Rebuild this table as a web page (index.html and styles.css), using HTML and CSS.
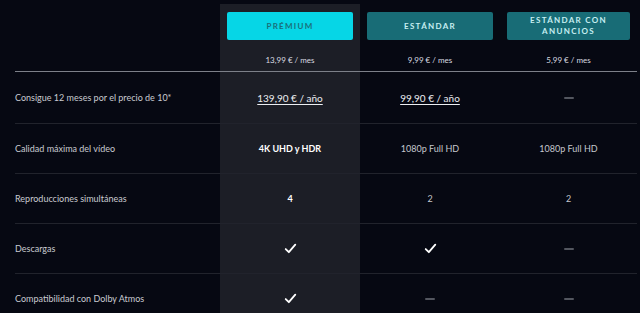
FILE: index.html
```html
<!DOCTYPE html>
<html lang="es">
<head>
<meta charset="utf-8">
<title>Planes</title>
<link rel="stylesheet" href="styles.css">
</head>
<body>
<div class="table">
  <div class="head">
    <div class="hcell"></div>
    <div class="hcell hl">
      <div class="btn btn-premium">PRÉMIUM</div>
      <div class="price">13,99 € / mes</div>
    </div>
    <div class="hcell">
      <div class="btn btn-std">ESTÁNDAR</div>
      <div class="price">9,99 € / mes</div>
    </div>
    <div class="hcell">
      <div class="btn btn-std">ESTÁNDAR CON<br>ANUNCIOS</div>
      <div class="price">5,99 € / mes</div>
    </div>
  </div>

  <div class="row first">
    <div class="label">Consigue 12 meses por el precio de 10*</div>
    <div class="cell hl"><span class="val link">139,90 € / año</span></div>
    <div class="cell"><span class="val link">99,90 € / año</span></div>
    <div class="cell"><span class="dash"></span></div>
  </div>
  <div class="row">
    <div class="label">Calidad máxima del vídeo</div>
    <div class="cell hl"><span class="val strong">4K UHD y HDR</span></div>
    <div class="cell"><span class="val">1080p Full HD</span></div>
    <div class="cell"><span class="val">1080p Full HD</span></div>
  </div>
  <div class="row">
    <div class="label">Reproducciones simultáneas</div>
    <div class="cell hl"><span class="val strong">4</span></div>
    <div class="cell"><span class="val">2</span></div>
    <div class="cell"><span class="val">2</span></div>
  </div>
  <div class="row">
    <div class="label">Descargas</div>
    <div class="cell hl"><svg class="check" viewBox="0 0 14 12"><path d="M1.8 6.6 L5.2 10 L12.2 1.8" /></svg></div>
    <div class="cell"><svg class="check" viewBox="0 0 14 12"><path d="M1.8 6.6 L5.2 10 L12.2 1.8" /></svg></div>
    <div class="cell"><span class="dash"></span></div>
  </div>
  <div class="row">
    <div class="label">Compatibilidad con Dolby Atmos</div>
    <div class="cell hl"><svg class="check" viewBox="0 0 14 12"><path d="M1.8 6.6 L5.2 10 L12.2 1.8" /></svg></div>
    <div class="cell"><span class="dash"></span></div>
    <div class="cell"><span class="dash"></span></div>
  </div>
</div>
</body>
</html>
```
FILE: styles.css
```css
html, body {
  margin: 0;
  padding: 0;
  background: #060812;
  width: 640px;
  height: 313px;
  overflow: hidden;
  font-family: Lato, "Noto Sans", sans-serif;
}

.table {
  display: flex;
  flex-direction: column;
}

.head,
.row {
  display: grid;
  grid-template-columns: 205px 140px 140px 137px;
  margin: 0 3px 0 15px;
}

.head {
  height: 71px;
  border-bottom: 1px solid #7d8089;
}

.hcell {
  margin-top: 4px;
  padding: 8px 7px 0;
  display: flex;
  flex-direction: column;
  align-items: stretch;
}

.hl {
  background: #1c1e26;
}

.btn {
  height: 28px;
  border-radius: 2px;
  display: flex;
  align-items: center;
  justify-content: center;
  text-align: center;
  font-size: 8px;
  letter-spacing: 1.3px;
  line-height: 11px;
  font-weight: 700;
}

.btn-premium {
  background: #06d6e6;
  color: #1a6f79;
}

.btn-std {
  background: #186c76;
  color: #c7eff2;
}

.price {
  margin-top: 15px;
  text-align: center;
  font-size: 8px;
  color: #d9dbe0;
}

.row {
  height: 49px;
  border-bottom: 1px solid rgba(255, 255, 255, 0.11);
}

.row.first {
  height: 51px;
}

.label {
  display: flex;
  align-items: center;
  font-size: 9px;
  color: #c9cbd1;
}

.cell {
  display: flex;
  align-items: center;
  justify-content: center;
}

.val {
  font-size: 9px;
  color: #c5c7cd;
}

.val.strong {
  color: #ffffff;
  font-weight: 700;
}

.val.link {
  font-size: 10px;
  color: #eceef2;
  text-decoration: underline;
  text-underline-offset: 2px;
}

.check {
  width: 13px;
  height: 11px;
  fill: none;
  stroke: #ffffff;
  stroke-width: 2;
  stroke-linecap: round;
  stroke-linejoin: round;
}

.dash {
  width: 10px;
  height: 2px;
  border-radius: 1px;
  background: #53565f;
}
```
